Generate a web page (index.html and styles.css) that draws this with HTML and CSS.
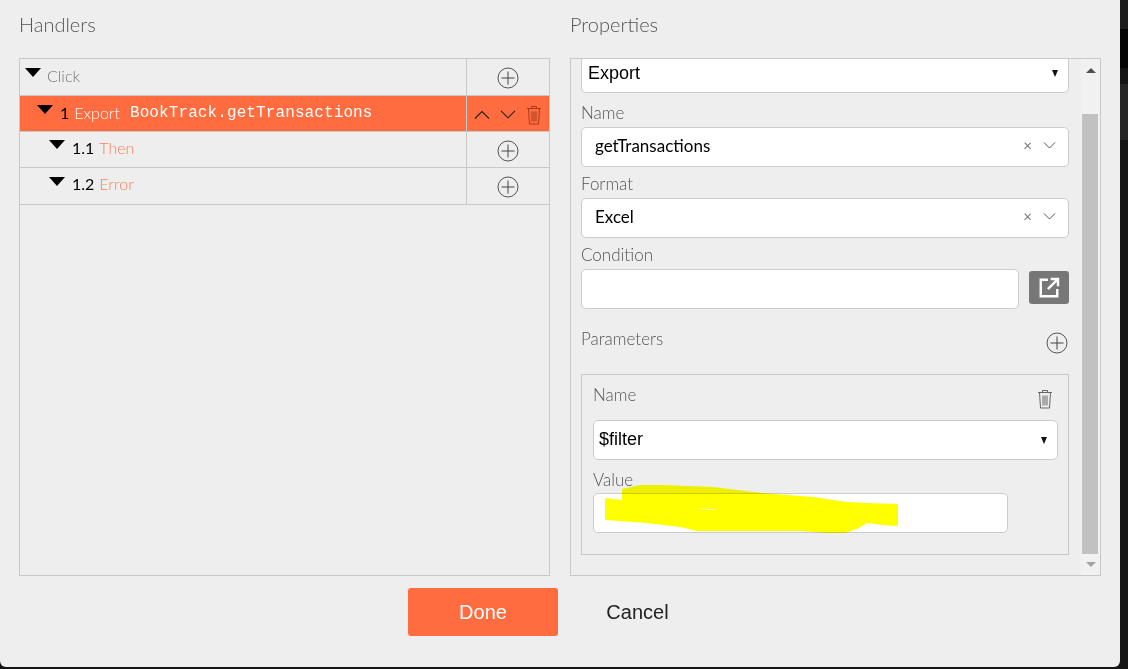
FILE: index.html
```html
<!DOCTYPE html>
<html lang="en">
<head>
<meta charset="utf-8">
<title>Handlers</title>
<link rel="stylesheet" href="styles.css">
</head>
<body>
<svg class="defs" width="0" height="0" aria-hidden="true">
  <symbol id="plus" viewBox="0 0 22 22"><circle cx="11" cy="11" r="10" fill="none" stroke="#555" stroke-width="1"/><path d="M11 4.500v13M4.500 11h13" stroke="#444" stroke-width="1" fill="none"/></symbol>
  <symbol id="trash" viewBox="0 0 16 20"><path d="M1 3.500h14M5.500 3.500V1.500h5v2M2.500 3.500l1 15.500h9l1-15.500M6 6.500v10M8 6.500v10M10 6.500v10" fill="none" stroke="currentColor" stroke-width="1"/></symbol>
</svg>
<main class="dialog">
  <div class="columns">
    <section class="column">
      <h2 class="title">Handlers</h2>
      <div class="panel">
        <div class="row row-tall">
          <div class="row-main"><i class="tri"></i><span class="muted">Click</span></div>
          <div class="row-act"><svg class="plus"><use href="#plus"/></svg></div>
        </div>
        <div class="row row-active">
          <div class="row-main lvl1"><i class="tri"></i><span class="num">1</span><span class="name">Export</span><code class="code">BookTrack.getTransactions</code></div>
          <div class="row-act act-tools">
            <svg class="chev" viewBox="0 0 16 9"><path d="M1 8.500 8 1.500l7 7" fill="none" stroke="#222" stroke-width="1.100"/></svg>
            <svg class="chev" viewBox="0 0 16 9"><path d="M1 .800l7 7 7-7" fill="none" stroke="#222" stroke-width="1.100"/></svg>
            <svg class="trash trash-hot"><use href="#trash"/></svg>
          </div>
        </div>
        <div class="row">
          <div class="row-main lvl2"><i class="tri"></i><span class="num">1.1</span><span class="accent">Then</span></div>
          <div class="row-act"><svg class="plus"><use href="#plus"/></svg></div>
        </div>
        <div class="row row-tall">
          <div class="row-main lvl2"><i class="tri"></i><span class="num">1.2</span><span class="accent">Error</span></div>
          <div class="row-act"><svg class="plus"><use href="#plus"/></svg></div>
        </div>
      </div>
    </section>
    <section class="column">
      <h2 class="title">Properties</h2>
      <div class="panel panel-scroll">
        <div class="scroll-body">
          <div class="field field-first sans">Export<i class="caret"></i></div>
          <label class="label">Name</label>
          <div class="field combo"><span>getTransactions</span><span class="combo-x">×</span><svg class="combo-chev" viewBox="0 0 12 7"><path d="M.5.500 6 6l5.500-5.500" fill="none" stroke="#555"/></svg></div>
          <label class="label">Format</label>
          <div class="field combo"><span>Excel</span><span class="combo-x">×</span><svg class="combo-chev" viewBox="0 0 12 7"><path d="M.5.500 6 6l5.500-5.500" fill="none" stroke="#555"/></svg></div>
          <label class="label">Condition</label>
          <div class="cond">
            <div class="field cond-input"></div>
            <button class="open-btn" type="button"><svg width="22" height="22" viewBox="0 0 20 20"><path d="M9 2.500H2.500v15h15V11M11.500 1.800h6.700v6.700M18 2l-9 9" fill="none" stroke="#fff" stroke-width="2.200"/></svg></button>
          </div>
          <div class="param-head"><span class="label label-flat">Parameters</span><svg class="plus"><use href="#plus"/></svg></div>
          <div class="param-box">
            <div class="param-name"><span class="label label-flat">Name</span><svg class="trash trash-grey"><use href="#trash"/></svg></div>
            <div class="field field-param sans">$filter<i class="caret"></i></div>
            <label class="label label-value">Value</label>
            <div class="value-wrap">
              <div class="field value-input"></div>
              <svg class="scribble" width="320" height="60" viewBox="600 480 320 60"><path fill-rule="evenodd" fill="#ffff00" d="M605 498 622 500 622 489 640 485 663 485 713 487 762 493 813 497 847 502 867 503 898 504 898 526 883 525 867 523 857 529 845 533 827 533 800 531 767 531 697 531 680 527 647 523 605 520ZM696 508 708 510 720 509 707 509Z"/></svg>
            </div>
          </div>
        </div>
        <div class="scrollbar">
          <i class="arrow-up"></i>
          <div class="track"><div class="thumb"></div></div>
          <i class="arrow-down"></i>
        </div>
      </div>
    </section>
  </div>
  <footer class="actions">
    <button class="btn-done" type="button">Done</button>
    <button class="btn-cancel" type="button">Cancel</button>
  </footer>
</main>
</body>
</html>
```

FILE: styles.css
```css
* { box-sizing: border-box; }
html, body { margin: 0; height: 669px; overflow: hidden; }
body {
  width: 1128px;
  background: linear-gradient(#1c1c1c 0 29px, #050505 29px 68px, #141414 68px 84px, #262626 84px 140px, #151515 140px);
  font-family: Lato, "Liberation Sans", sans-serif;
  color: #000;
}
.defs { position: absolute; }
.dialog {
  width: 1120px;
  height: 667px;
  background: #eee;
  border-radius: 0 0 6px 6px;
  padding: 0 19px;
  display: flex;
  flex-direction: column;
}
.columns { display: flex; gap: 20px; height: 576px; }
.column { width: 531px; display: flex; flex-direction: column; }
.title {
  margin: 0;
  height: 58px;
  padding-top: 12px;
  font-size: 20px;
  line-height: 24px;
  font-weight: 300;
  color: #555;
}
.panel { flex: 1; border: 1px solid #c8c8c8; min-height: 0; }
.row { display: flex; height: 36px; border-bottom: 1px solid #c8c8c8; }
.row-tall { height: 37px; }
.row-active { background: #ff6c40; color: #fff; }
.row-main { flex: 1; display: flex; align-items: center; padding: 0 0 3px 5px; font-size: 16px; font-weight: 300; }
.row-active .row-main { padding-bottom: 3px; }
.lvl1 { padding-left: 17px; }
.lvl2 { padding-left: 29px; padding-bottom: 5px; }
.row-act {
  width: 83px;
  border-left: 1px solid #c8c8c8;
  display: flex;
  align-items: center;
  justify-content: center;
  padding-top: 2px;
}
.tri {
  width: 0; height: 0;
  border-left: 8px solid transparent;
  border-right: 8px solid transparent;
  border-top: 9px solid #000;
  margin: -7px 7px 0 0;
}
.lvl1 .tri, .lvl2 .tri { margin-top: -5px; }
.muted { color: #777; margin-left: -1px; }
.num { color: #000; font-weight: 400; margin-right: 5px; }
.name { color: #fff; margin-right: 10px; font-weight: 300; }
.code { font-family: "Liberation Mono", monospace; font-size: 16px; letter-spacing: 0.1px; color: #fff; margin-top: 2px; }
.accent { color: #ff8058; font-weight: 300; }
.plus { width: 22px; height: 22px; display: block; }
.act-tools { gap: 10px; justify-content: flex-start; padding-left: 7px; padding-top: 2px; }
.chev { width: 16px; height: 9px; }
.trash { width: 16px; height: 20px; display: block; }
.trash-hot { color: #a83a1a; }
.trash-grey { color: #666; }
.panel-scroll { display: flex; overflow: hidden; }
.scroll-body { flex: 1; padding: 0 12px 0 10px; min-width: 0; margin-top: -6px; }
.field {
  height: 40px;
  background: #fff;
  border: 1px solid #ccc;
  border-radius: 5px;
  display: flex;
  align-items: center;
  font-size: 17px;
  padding-left: 13px;
  position: relative;
}
.sans { font-family: "Liberation Sans", sans-serif; font-size: 18px; }
.field-first { padding: 0 0 0 6px; margin-bottom: 3px; }
.caret {
  position: absolute;
  right: 10px; top: 50%;
  margin-top: -3px;
  border-left: 3px solid transparent;
  border-right: 3px solid transparent;
  border-top: 7px solid #111;
}
.label { display: block; font-size: 17px; font-weight: 300; color: #555; height: 31px; line-height: 34px; }
.label-flat { height: auto; line-height: 24px; }
.combo { padding-bottom: 4px; }
.combo span:first-child { flex: 1; }
.combo-x { color: #777; font-size: 15px; margin-right: 11px; }
.combo-chev { width: 13px; height: 7px; margin-right: 12px; }
.cond { display: flex; gap: 10px; align-items: flex-start; }
.cond-input { flex: 1; }
.open-btn {
  width: 40px; height: 33px;
  margin-top: 2px;
  background: #777;
  border: 0;
  border-radius: 3px;
  display: flex;
  align-items: center;
  justify-content: center;
  padding: 0;
}
.param-head { display: flex; justify-content: space-between; align-items: flex-start; margin-top: 18px; height: 47px; padding-right: 1px; }
.param-head .plus { margin-top: 5px; }
.param-box { border: 1px solid #c8c8c8; padding: 8px 10px 21px 11px; }
.param-name { display: flex; justify-content: space-between; height: 37px; padding-right: 5px; }
.param-name .trash { margin-top: 6px; }
.field-param { padding: 0 0 2px 5px; }
.label-value { height: 33px; line-height: 40px; }
.value-wrap { position: relative; width: 415px; }
.value-input { width: 100%; }
.scribble { position: absolute; left: 7px; top: -13px; mix-blend-mode: multiply; }
.scrollbar { width: 19px; display: flex; flex-direction: column; background: #f1f1f1; }
.arrow-up, .arrow-down { display: block; height: 19px; position: relative; }
.arrow-up::after, .arrow-down::after {
  content: "";
  position: absolute;
  left: 5px;
  border-left: 5px solid transparent;
  border-right: 5px solid transparent;
}
.arrow-up::after { top: 9px; border-bottom: 5px solid #505050; }
.arrow-down::after { top: 6px; border-top: 5px solid #a3a3a3; }
.track { flex: 1; padding: 36px 2px 0 1px; }
.thumb { height: 440px; background: #c1c1c1; }
.actions { display: flex; align-items: flex-start; padding: 12px 0 0 389px; }
.btn-done {
  width: 150px; height: 48px;
  background: #ff6c40;
  border: 0;
  border-radius: 3px;
  color: #fff;
  font: 20px "Liberation Sans", sans-serif;
}
.btn-cancel {
  margin-left: 17px;
  width: 125px; height: 48px;
  background: none;
  border: 0;
  color: #222;
  font: 20px "Liberation Sans", sans-serif;
}
```
